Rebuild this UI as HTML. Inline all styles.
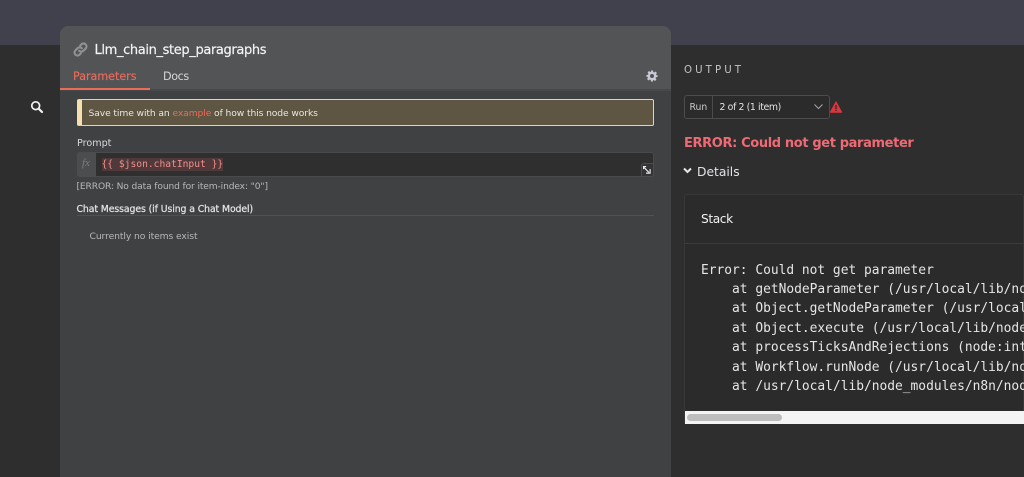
<!DOCTYPE html>
<html><head><meta charset="utf-8">
<style>
html,body{margin:0;padding:0;width:1024px;height:477px;overflow:hidden;background:#2e2e2e}
body{position:relative;font-family:"Liberation Sans",sans-serif;color:#e8e8ea}
.a{position:absolute;white-space:nowrap;line-height:1}
.m{font-family:"DejaVu Sans Mono","Liberation Mono",monospace}
.d{font-family:"DejaVu Sans","Liberation Sans",sans-serif}
</style></head><body>
<div class="a" style="left:0;top:0;width:1024px;height:45px;background:#41414d"></div>
<div class="a" style="left:0;top:45px;width:1024px;height:432px;background:#2e2e2e"></div>
<svg class="a" style="left:30px;top:100px" width="14" height="14" viewBox="0 0 14 14"><circle cx="5.7" cy="5.7" r="3.9" fill="none" stroke="#f2f2f4" stroke-width="1.7"/><path d="M8.6 8.6L12 12" stroke="#f2f2f4" stroke-width="2.2" stroke-linecap="round"/></svg>

<!-- panel -->
<div class="a" style="left:60px;top:26px;width:611px;height:451px;background:#404142;border-radius:8px 8px 0 0;overflow:hidden">
  <div class="a" style="left:0;top:0;width:611px;height:63px;background:#525456;border-bottom:2px solid #48494b;box-sizing:content-box"></div>
</div>
<svg class="a" style="left:73px;top:42px" width="15" height="15" viewBox="0 0 15 15" fill="none" stroke="#8f9092" stroke-width="2.2" stroke-linecap="round"><path d="M6.2 8.8a2.9 2.9 0 0 0 4.2 0l2.2-2.2a2.95 2.95 0 0 0-4.2-4.2L7.2 3.6"/><path d="M8.8 6.2a2.9 2.9 0 0 0-4.2 0L2.4 8.4a2.95 2.95 0 0 0 4.2 4.2l1.2-1.2"/></svg>
<div class="a d" style="left:94.5px;top:43.5px;font-size:13px;letter-spacing:-.36px;color:#f4f4f5;-webkit-text-stroke:.2px #f4f4f5">Llm_chain_step_paragraphs</div>
<div class="a d" style="left:73px;top:70.5px;font-size:11.1px;color:#ea6c5c;-webkit-text-stroke:.15px #ea6c5c">Parameters</div>
<div class="a" style="left:60px;top:88px;width:90px;height:2px;background:#ea6c5c"></div>
<div class="a d" style="left:163px;top:70.5px;font-size:11.2px;letter-spacing:-.4px;color:#d6d6da">Docs</div>
<svg class="a" style="left:645.5px;top:70px" width="12" height="12" viewBox="0 0 24 24"><path fill="#c8cad6" fill-rule="evenodd" d="M10 1h4l.6 3.1 1.9.8 2.6-1.8 2.8 2.8-1.8 2.6.8 1.9L23 10v4l-3.1.6-.8 1.9 1.8 2.6-2.8 2.8-2.6-1.8-1.9.8L14 23h-4l-.6-3.1-1.9-.8-2.6 1.8-2.8-2.8 1.8-2.6-.8-1.9L1 14v-4l3.1-.6.8-1.9-1.8-2.6 2.8-2.8 2.6 1.8 1.9-.8zM12 8a4 4 0 1 0 0 8 4 4 0 0 0 0-8z"/></svg>

<!-- notice -->
<div class="a" style="left:77px;top:99px;width:577px;height:27px;box-sizing:border-box;background:#5e5542;border:1px solid #e3d5a8;border-left:5px solid #f5dfae;border-radius:2px"></div>
<div class="a d" style="left:88.5px;top:108.5px;font-size:9.2px;letter-spacing:-.11px;color:#e9e7e1">Save time with an <span style="color:#ea6c5c">example</span> of how this node works</div>

<!-- prompt -->
<div class="a d" style="left:77px;top:139px;font-size:9.6px;color:#d9d9dc">Prompt</div>
<div class="a" style="left:77px;top:152px;width:577px;height:25px;box-sizing:border-box;background:#2f2f2f;border:1px solid #494a4c;border-radius:3px"></div>
<div class="a" style="left:77px;top:152px;width:19px;height:25px;background:#4c4d4f;border-radius:3px 0 0 3px"></div>
<div class="a" style="left:82px;top:158px;font-family:'Liberation Serif',serif;font-style:italic;font-size:11px;color:#7c7d80">fx</div>
<div class="a m" style="left:101.5px;top:157.5px;font-size:9.65px;line-height:13px;height:13px;background:#4f393b;color:#f08f8b">{{ $json.chatInput }}</div>
<div class="a" style="left:641px;top:163px;width:13px;height:14px;box-sizing:border-box;background:#343436;border:1px solid #4c4d4f;border-radius:3px 0 3px 0"></div>
<svg class="a" style="left:643px;top:166px" width="8" height="8" viewBox="0 0 9 9" fill="none" stroke="#eceef4" stroke-width="1.3"><path d="M1 1.5L6.5 7"/><path d="M8 3.5V8H3.5"/><path d="M.5 3.5V.6H3.5"/></svg>
<div class="a d" style="left:76.5px;top:183px;font-size:9.1px;letter-spacing:-.12px;color:#b8b8bb">[ERROR: No data found for item-index: "0"]</div>
<div class="a d" style="left:76.5px;top:205px;font-size:9.3px;letter-spacing:-.08px;color:#e2e2e4;-webkit-text-stroke:.25px #e2e2e4">Chat Messages (if Using a Chat Model)</div>
<div class="a" style="left:77px;top:215px;width:577px;height:1px;background:#505153"></div>
<div class="a d" style="left:89.5px;top:231.5px;font-size:9.2px;letter-spacing:-.09px;color:#b8b8bb">Currently no items exist</div>

<!-- output -->
<div class="a d" style="left:684px;top:66px;font-size:10.2px;letter-spacing:3.1px;color:#c4c4c8">OUTPUT</div>
<div class="a" style="left:684px;top:95px;width:146px;height:24px;box-sizing:border-box;background:#2b2b2b;border:1px solid #4c4c4e;border-radius:3px"></div>
<div class="a" style="left:712px;top:95px;width:1px;height:24px;background:#4c4c4e"></div>
<div class="a d" style="left:689.5px;top:102.5px;font-size:9.3px;color:#c9c9cc">Run</div>
<div class="a d" style="left:719.5px;top:102.5px;font-size:9.4px;letter-spacing:-.4px;color:#e3e3e5">2 of 2 (1 item)</div>
<svg class="a" style="left:813px;top:103px" width="11" height="8" viewBox="0 0 11 8" fill="none" stroke="#a6a6aa" stroke-width="1"><path d="M1.5 1.5L5.5 5.5L9.5 1.5"/></svg>
<svg class="a" style="left:830px;top:101px" width="12" height="12" viewBox="0 0 12 12"><path d="M6 .8L11.6 11.2H.4z" fill="#e0343c" stroke="#e0343c" stroke-linejoin="round"/><rect x="5.3" y="4" width="1.4" height="4" fill="#2e2e2e"/><rect x="5.3" y="8.7" width="1.4" height="1.4" fill="#2e2e2e"/></svg>
<div class="a d" style="left:684px;top:136.5px;font-size:13px;letter-spacing:-.37px;font-weight:bold;color:#ee6a74">ERROR: Could not get parameter</div>
<svg class="a" style="left:683px;top:167px" width="9" height="8" viewBox="0 0 9 8" fill="none" stroke="#e8e8ea" stroke-width="2"><path d="M1 1.5L4.5 5L8 1.5"/></svg>
<div class="a d" style="left:697px;top:165.5px;font-size:12.3px;color:#e4e4e8">Details</div>

<div class="a" style="left:684px;top:194px;width:340px;height:230px;box-sizing:border-box;background:#2b2b2b;border:1px solid #383838;border-radius:3px 3px 0 0"></div>
<div class="a" style="left:685px;top:243px;width:339px;height:1px;background:#3c3c3c"></div>
<div class="a d" style="left:701px;top:213px;font-size:12.2px;letter-spacing:-.4px;color:#f2f2f4">Stack</div>
<div class="a m" style="left:701px;top:260.6px;width:323px;overflow:hidden;font-size:12.9px;line-height:19.4px;height:137px;white-space:pre;color:#e6e6e8">Error: Could not get parameter
    at getNodeParameter (/usr/local/lib/node_modules
    at Object.getNodeParameter (/usr/local/lib/node_m
    at Object.execute (/usr/local/lib/node_modules/n
    at processTicksAndRejections (node:internal/proc
    at Workflow.runNode (/usr/local/lib/node_modules
    at /usr/local/lib/node_modules/n8n/node_modules/</div>
<div class="a" style="left:685px;top:411px;width:339px;height:13px;background:#f4f4f4"></div>
<div class="a" style="left:687px;top:414px;width:95px;height:7px;background:#bdbdbd;border-radius:4px"></div>
</body></html>
